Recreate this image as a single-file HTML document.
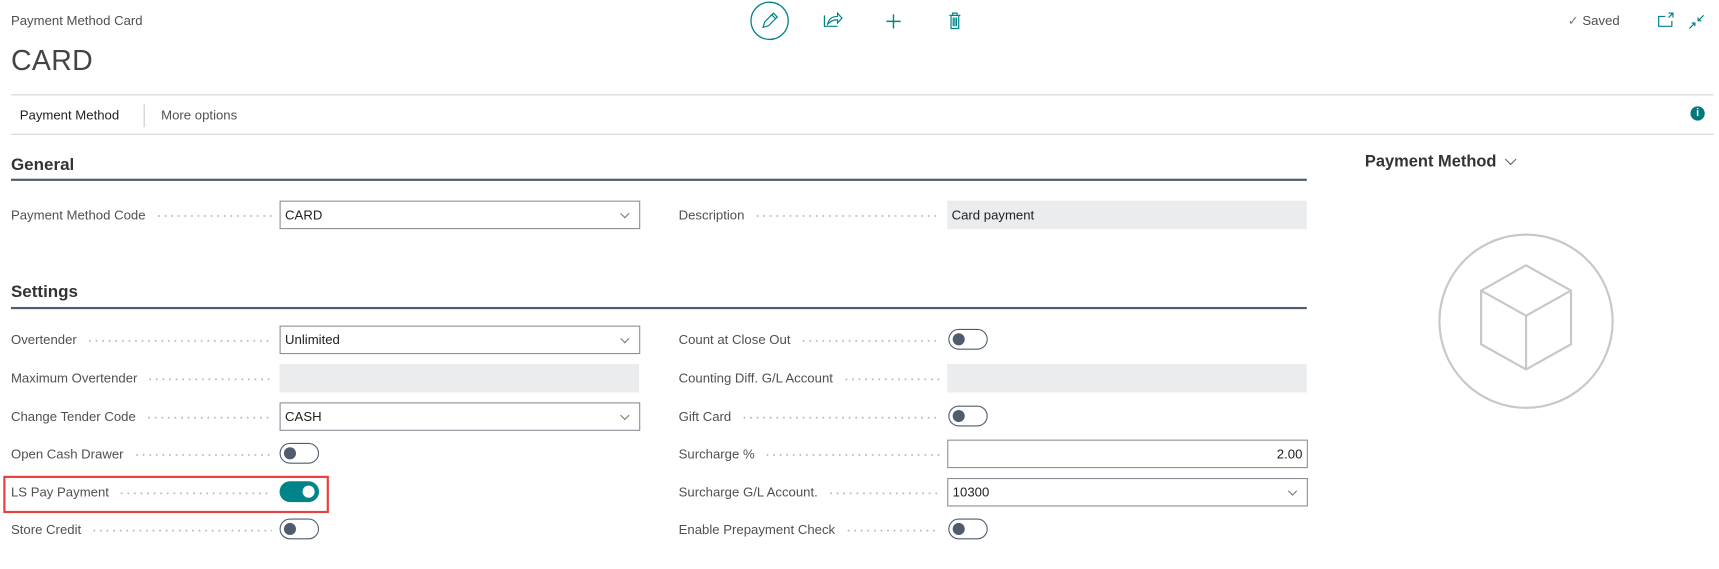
<!DOCTYPE html>
<html><head><meta charset="utf-8"><style>
html,body{margin:0;padding:0;background:#fff;overflow:hidden;width:1719px;height:569px}
#w{position:absolute;left:0;top:0;width:1568px;height:519px;transform:scale(1.0963);transform-origin:0 0;font-family:"Liberation Sans",Arial,sans-serif;color:#505050}
.a{position:absolute;white-space:nowrap}
.lbl{position:absolute;font-size:12px;color:#505050;display:flex;align-items:center;height:26px}
.lbl .d{flex:1;margin:0 0 0 9px;height:2px;position:relative;top:1px;background:radial-gradient(circle,#bdbdbd 0.8px,transparent 1px) 0 0/6px 2px repeat-x}
.inp{position:absolute;height:24px;border:1px solid #8a8f98;background:#fff;font-size:12px;color:#212121;line-height:24px;padding-left:4px;box-sizing:content-box}
.ro{position:absolute;height:26px;background:#ebecee;font-size:12px;color:#212121;line-height:26px;padding-left:4px}
.chev{position:absolute;right:10px;top:8px;width:5px;height:5px;border-right:1px solid #777;border-bottom:1px solid #777;transform:rotate(45deg)}
.tg{position:absolute;width:34px;height:17px;border:1.2px solid #505c6d;border-radius:10px;background:#fff}
.tg::after{content:"";position:absolute;left:3px;top:3px;width:11px;height:11px;border-radius:50%;background:#505c6d}
.tg.on{background:#008489;border-color:#008489}
.tg.on::after{left:auto;right:3px;background:#fff}
</style></head><body><div id="w">
<div class="a" style="left:10px;top:12px;font-size:12px;color:#505050">Payment Method Card</div>
<div class="a" style="left:10px;top:40px;font-size:26px;color:#444;letter-spacing:0.3px">CARD</div>
<svg class="a" style="left:684px;top:1px" width="200" height="36" viewBox="0 0 200 36">
<circle cx="18" cy="18" r="17" fill="none" stroke="#008489" stroke-width="1.2"/>
<path d="M12 24 l1.5-5 8-8 3.5 3.5-8 8z M20 12.5l3.5 3.5" fill="none" stroke="#008489" stroke-width="1.1"/>
<path d="M68 13v10h12 M71 21c1-5 4-7 9-7v-3l4 4.5-4 4.5v-3c-4 0-6 1-9 4z" fill="none" stroke="#008489" stroke-width="1.1"/>
<path d="M131 12v13 M124.5 18.5h13" stroke="#008489" stroke-width="1.3"/>
<path d="M182 13h10 M185 13v-2h4v2 M183.5 13v12h7v-12 M185.5 15v8 M187 15v8 M188.5 15v8" fill="none" stroke="#008489" stroke-width="1.1"/>
</svg>
<div class="a" style="left:1430px;top:12px;font-size:12px;color:#505050"><span style="color:#777">&#10003;</span> Saved</div>
<svg class="a" style="left:1510px;top:9px" width="50" height="20">
<path d="M9 6H3v9h12v-5 M12 3h4v4 M16 3l-4 4" fill="none" stroke="#008489" stroke-width="1.1"/>
<path d="M31 17l5-5 M33 12h3v3 M44 5l-5 5 M39 7v3h3" fill="none" stroke="#008489" stroke-width="1.1"/>
</svg>
<div class="a" style="left:10px;top:86px;width:1553px;height:1px;background:#d4d4d4"></div>
<div class="a" style="left:18px;top:98px;font-size:12px;color:#212121">Payment Method</div>
<div class="a" style="left:131px;top:95px;width:1px;height:21px;background:#c8c8c8"></div>
<div class="a" style="left:147px;top:98px;font-size:12px;color:#505050">More options</div>
<div class="a" style="left:1542px;top:97px;width:13px;height:13px;border-radius:50%;background:#00787d;color:#fff;font-size:10px;font-weight:bold;text-align:center;line-height:13px">i</div>
<div class="a" style="left:10px;top:122px;width:1553px;height:1px;background:#d4d4d4"></div>

<div class="a" style="left:10px;top:142px;font-size:15.5px;font-weight:bold;color:#333">General</div>
<div class="a" style="left:10px;top:163px;width:1182px;height:2px;background:#505c6d"></div>
<div class="lbl" style="left:10px;top:183px;width:238px">Payment Method Code<span class="d"></span></div>
<div class="inp" style="left:255px;top:183px;width:323px">CARD<span class="chev"></span></div>
<div class="lbl" style="left:619px;top:183px;width:238px">Description<span class="d"></span></div>
<div class="ro" style="left:864px;top:183px;width:324px">Card payment</div>

<div class="a" style="left:10px;top:258px;font-size:15.5px;font-weight:bold;color:#333">Settings</div>
<div class="a" style="left:10px;top:280px;width:1182px;height:1.5px;background:#505c6d"></div>

<div class="lbl" style="left:10px;top:297px;width:238px">Overtender<span class="d"></span></div>
<div class="inp" style="left:255px;top:297px;width:323px">Unlimited<span class="chev"></span></div>
<div class="lbl" style="left:10px;top:332px;width:238px">Maximum Overtender<span class="d"></span></div>
<div class="ro" style="left:255px;top:332px;width:324px"></div>
<div class="lbl" style="left:10px;top:367px;width:238px">Change Tender Code<span class="d"></span></div>
<div class="inp" style="left:255px;top:367px;width:323px">CASH<span class="chev"></span></div>
<div class="lbl" style="left:10px;top:401px;width:238px">Open Cash Drawer<span class="d"></span></div>
<div class="tg" style="left:255px;top:404px"></div>
<div class="lbl" style="left:10px;top:436px;width:238px">LS Pay Payment<span class="d"></span></div>
<div class="tg on" style="left:255px;top:439px"></div>
<div class="a" style="left:3px;top:434px;width:293px;height:30px;border:2px solid #e8413d"></div>
<div class="lbl" style="left:10px;top:470px;width:238px">Store Credit<span class="d"></span></div>
<div class="tg" style="left:255px;top:473px"></div>

<div class="lbl" style="left:619px;top:297px;width:238px">Count at Close Out<span class="d"></span></div>
<div class="tg" style="left:865px;top:300px"></div>
<div class="lbl" style="left:619px;top:332px;width:238px">Counting Diff. G/L Account<span class="d"></span></div>
<div class="ro" style="left:864px;top:332px;width:324px"></div>
<div class="lbl" style="left:619px;top:367px;width:238px">Gift Card<span class="d"></span></div>
<div class="tg" style="left:865px;top:370px"></div>
<div class="lbl" style="left:619px;top:401px;width:238px">Surcharge %<span class="d"></span></div>
<div class="inp" style="left:864px;top:401px;width:319px;text-align:right;padding-right:4px">2.00</div>
<div class="lbl" style="left:619px;top:436px;width:238px">Surcharge G/L Account.<span class="d"></span></div>
<div class="inp" style="left:864px;top:436px;width:323px">10300<span class="chev"></span></div>
<div class="lbl" style="left:619px;top:470px;width:238px">Enable Prepayment Check<span class="d"></span></div>
<div class="tg" style="left:865px;top:473px"></div>

<div class="a" style="left:1245px;top:139px;font-size:15px;font-weight:bold;color:#333">Payment Method</div>
<svg class="a" style="left:1370px;top:141px" width="16" height="12"><path d="M3 4l5 5 5-5" fill="none" stroke="#666" stroke-width="1"/></svg>
<svg class="a" style="left:1310px;top:212px" width="164" height="164" viewBox="0 0 164 164">
<circle cx="82" cy="81" r="79" fill="none" stroke="#c8c8c8" stroke-width="2"/>
<path d="M82 30l41 23v49l-41 23-41-23V53z M41 53l41 23 41-23 M82 76v49" fill="none" stroke="#c8c8c8" stroke-width="2" stroke-linejoin="round"/>
</svg>
</div></body></html>
